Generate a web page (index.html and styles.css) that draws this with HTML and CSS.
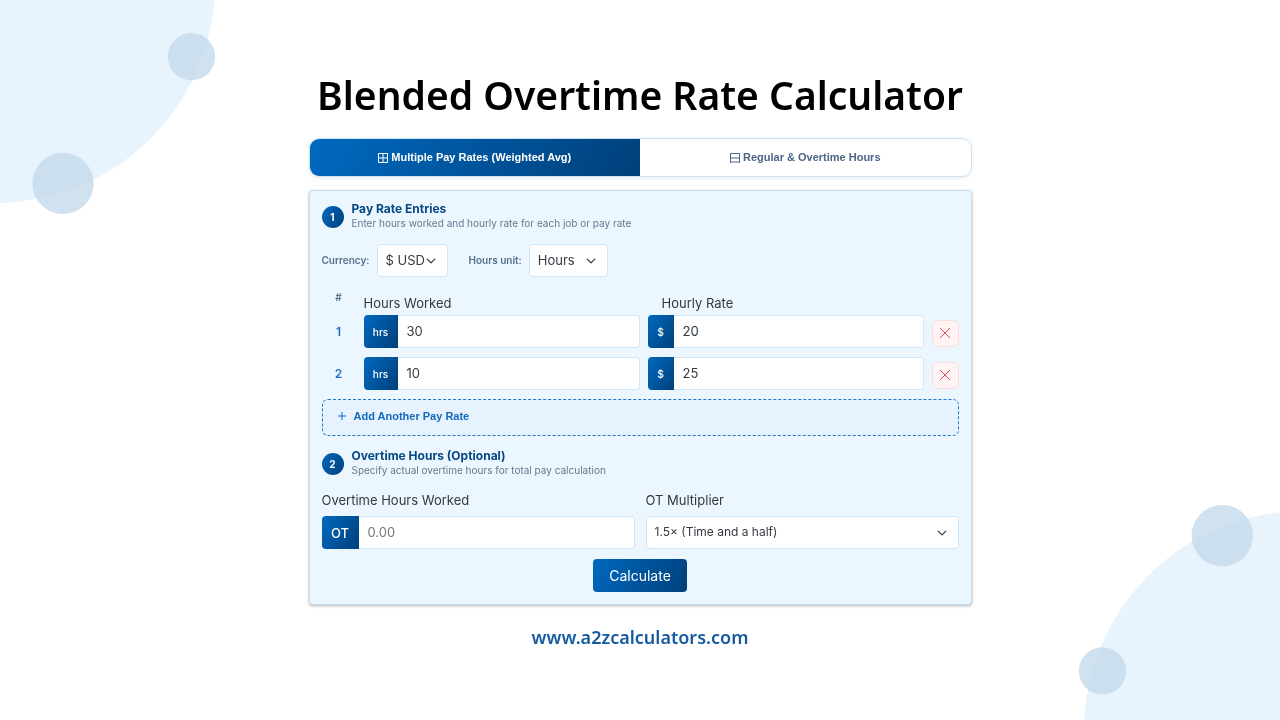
FILE: index.html
```html
<!DOCTYPE html>
<html lang="en">
<head>
<meta charset="utf-8">
<meta name="viewport" content="width=device-width, initial-scale=1">
<title>Blended Overtime Rate Calculator</title>
<link rel="stylesheet" href="styles.css">
</head>
<body>
<div class="decor" aria-hidden="true">
  <svg class="decor-art decor-top" viewBox="0 0 230 230">
    <circle class="blob" cx="-5" cy="-17" r="220"/>
    <circle class="bubble" cx="191.5" cy="56.7" r="23.7"/>
    <circle class="bubble" cx="63" cy="183.4" r="30.7"/>
  </svg>
  <svg class="decor-art decor-bottom" viewBox="0 0 230 230">
    <circle class="blob" cx="254" cy="241" r="220"/>
    <circle class="bubble" cx="172.3" cy="45.7" r="30.7"/>
    <circle class="bubble" cx="52.5" cy="180.9" r="23.7"/>
  </svg>
</div>

<main class="page">
  <h1 class="title">Blended Overtime Rate Calculator</h1>

  <div class="tabs" role="tablist">
    <button class="tab tab-active" type="button" role="tab" aria-selected="true">
      <svg class="tab-icon" viewBox="0 0 10 10"><path d="M.5.5h9v9h-9zM5 .5v9M.5 5h9"/></svg>
      Multiple Pay Rates (Weighted Avg)
    </button>
    <button class="tab" type="button" role="tab" aria-selected="false">
      <svg class="tab-icon" viewBox="0 0 10 10"><path d="M.5 10V.5h9V10M.5 5h9M.5 9h9"/></svg>
      Regular &amp; Overtime Hours
    </button>
  </div>

  <form class="panel">
    <section>
      <header class="section-head">
        <span class="step">1</span>
        <div>
          <h2 class="section-title">Pay Rate Entries</h2>
          <p class="section-note">Enter hours worked and hourly rate for each job or pay rate</p>
        </div>
      </header>

      <div class="options">
        <div class="option">
          <label class="option-label" for="currency">Currency:</label>
          <select class="control select select-currency" id="currency"><option>$ USD</option></select>
        </div>
        <div class="option">
          <label class="option-label" for="unit">Hours unit:</label>
          <select class="control select select-unit" id="unit"><option>Hours</option></select>
        </div>
      </div>

      <div class="entries-head">
        <span class="hash">#</span>
        <label class="label" for="hours1">Hours Worked</label>
        <label class="label" for="rate1">Hourly Rate</label>
      </div>
      <div class="entries">
        <div class="entry">
          <span class="index">1</span>
          <div class="group"><span class="addon addon-hrs">hrs</span><input class="control input" id="hours1" type="text" value="30"></div>
          <div class="group"><span class="addon addon-money">$</span><input class="control input" id="rate1" type="text" value="20"></div>
          <button class="remove" type="button" aria-label="Remove row 1"><svg class="remove-icon" viewBox="0 0 12 12"><path d="M1 1l10 10M11 1L1 11"/></svg></button>
        </div>
        <div class="entry">
          <span class="index">2</span>
          <div class="group"><span class="addon addon-hrs">hrs</span><input class="control input" type="text" value="10" aria-label="Hours Worked"></div>
          <div class="group"><span class="addon addon-money">$</span><input class="control input" type="text" value="25" aria-label="Hourly Rate"></div>
          <button class="remove" type="button" aria-label="Remove row 2"><svg class="remove-icon" viewBox="0 0 12 12"><path d="M1 1l10 10M11 1L1 11"/></svg></button>
        </div>
      </div>
      <button class="add" type="button">
        <svg class="add-icon" viewBox="0 0 8 8"><path d="M4 0v8M0 4h8"/></svg>
        Add Another Pay Rate
      </button>
    </section>

    <section>
      <header class="section-head">
        <span class="step">2</span>
        <div>
          <h2 class="section-title">Overtime Hours (Optional)</h2>
          <p class="section-note">Specify actual overtime hours for total pay calculation</p>
        </div>
      </header>
      <div class="overtime">
        <div class="field">
          <label class="label" for="ot">Overtime Hours Worked</label>
          <div class="group"><span class="addon addon-ot">OT</span><input class="control input" id="ot" type="text" placeholder="0.00"></div>
        </div>
        <div class="field">
          <label class="label" for="multiplier">OT Multiplier</label>
          <select class="control select select-multiplier" id="multiplier"><option>1.5× (Time and a half)</option></select>
        </div>
      </div>
    </section>
    <button class="calculate" type="button">Calculate</button>
  </form>

  <a class="site" href="#">www.a2zcalculators.com</a>
</main>
</body>
</html>
```
FILE: styles.css
```css
:root {
  --blue: #0069c0;
  --navy: #00407a;
  --slate: #55708c;
  --line: #cfe7fb;
  --fill: linear-gradient(120deg, var(--blue), var(--navy));
}

* { box-sizing: border-box; }

body {
  margin: 0;
  min-height: 100vh;
  background: #fff;
  color: #343a40;
  font: 13px/20px Inter, "Liberation Sans", sans-serif;
}

h1, h2, p { margin: 0; }
button, input, select { font: inherit; }
button { cursor: pointer; }

.decor {
  position: fixed;
  inset: 0;
  z-index: -1;
}
.decor-art { position: absolute; width: 230px; }
.decor-top { top: 0; left: 0; }
.decor-bottom { right: 0; bottom: 0; }
.blob { fill: #e8f4fd; }
.bubble { fill: #c4d9eb; fill-opacity: .8; }

.page {
  display: flex;
  flex-direction: column;
  align-items: stretch;
  width: min(100% - 32px, 663px);
  margin: 0 auto;
  padding: 71px 0 32px;
}

.title {
  align-self: center;
  margin-bottom: 19px;
  color: #000;
  font: 600 39px/48px "Noto Sans", sans-serif;
  text-align: center;
}

.tabs {
  display: grid;
  grid-template-columns: 1fr 1fr;
  margin-bottom: 13px;
  border: 1px solid #cfe3f3;
  border-radius: 10px;
  background: #fff;
  box-shadow: 0 1px 4px rgba(0, 105, 192, .12);
  overflow: hidden;
}
.tab {
  display: flex;
  align-items: center;
  justify-content: center;
  gap: 3px;
  height: 37px;
  padding: 0 0 2px;
  border: 0;
  background: none;
  color: #4c6685;
  font: bold 11px/16px "Liberation Sans", Arial, sans-serif;
}
.tab-active { background: var(--fill); color: #fff; }
.tab-icon {
  width: 10px;
  margin-top: 2px;
  fill: none;
  stroke: currentColor;
}

.panel {
  display: flex;
  flex-direction: column;
  padding: 10px 12px 12px;
  border: 1px solid #c3dff3;
  border-radius: 4px;
  background: #ebf6ff;
  box-shadow: 0 1px 3px rgba(0, 0, 0, .3);
}

.section-head {
  display: flex;
  align-items: center;
  gap: 8px;
}
.step {
  display: grid;
  place-items: center;
  width: 22px;
  height: 22px;
  margin-top: 2px;
  border-radius: 50%;
  background: var(--fill);
  color: #fff;
  font-size: 10px;
  font-weight: 700;
}
.section-title {
  color: #064683;
  font-size: 12px;
  font-weight: 700;
  line-height: 15px;
}
.section-note {
  color: #65798d;
  font-size: 10px;
  line-height: 14px;
}

.options {
  display: flex;
  gap: 21px;
  margin: 14px 0 13px;
}
.option {
  display: flex;
  align-items: center;
  gap: 7px;
}
.option-label {
  padding-bottom: 2px;
  color: var(--slate);
  font-size: 10px;
  font-weight: 600;
}

.control {
  width: 100%;
  height: 33px;
  border: 1px solid var(--line);
  border-radius: 4px;
  background-color: #fff;
  color: #343a40;
  font-size: 13px;
}
.select {
  padding: 0 8px 2px;
  appearance: none;
  background-image: url("data:image/svg+xml,%3Csvg xmlns='http://www.w3.org/2000/svg' viewBox='0 0 16 16'%3E%3Cpath fill='none' stroke='%23343a40' stroke-linecap='round' stroke-linejoin='round' stroke-width='2' d='m2 5 6 6 6-6'/%3E%3C/svg%3E");
  background-repeat: no-repeat;
  background-position: right 11px center;
  background-size: 10px 10px;
}
.select-currency { width: 71px; }
.select-unit { width: 79px; }
.select-multiplier { font-size: 12px; }
.input {
  min-width: 0;
  padding: 0 9px 2px;
  border-left: 0;
  border-radius: 0 4px 4px 0;
}
.input::placeholder { color: #757575; opacity: 1; }

.label { line-height: 20px; }

.entries-head {
  display: grid;
  grid-template-columns: 34px 1fr 1fr;
  gap: 8px;
  align-items: end;
  padding-right: 7px;
}
.hash {
  align-self: start;
  color: var(--slate);
  font-size: 10px;
  font-weight: 600;
  line-height: 14px;
  text-align: center;
}
.entries-head .label { padding-top: 3px; }
.entries {
  display: grid;
  gap: 9px;
  margin: 2px 0 9px;
}
.entry {
  display: grid;
  grid-template-columns: 34px 1fr 1fr 27px;
  gap: 8px;
  align-items: center;
}
.index {
  color: #1b6dc1;
  font-size: 12px;
  font-weight: 600;
  text-align: center;
}
.group { display: flex; }
.addon {
  display: grid;
  flex: none;
  place-items: center;
  border-radius: 4px 0 0 4px;
  background: var(--fill);
  color: #fff;
  font-size: 10px;
  font-weight: 500;
}
.addon-hrs { width: 34px; }
.addon-money { width: 26px; }
.addon-ot { width: 37px; font-size: 13px; }

.remove {
  display: grid;
  place-items: center;
  height: 27px;
  margin-top: 3px;
  padding: 0;
  border: 1px solid #fbdcdc;
  border-radius: 6px;
  background: #fff3f3;
}
.remove-icon {
  width: 12px;
  fill: none;
  stroke: #e04f5c;
}

.add {
  display: flex;
  align-items: center;
  gap: 8px;
  width: 100%;
  height: 37px;
  margin-bottom: 12px;
  padding: 0 15px 3px;
  border: 1px dashed #2177c9;
  border-radius: 6px;
  background: #e6f3ff;
  color: #1269bb;
  font: bold 11px/16px "Liberation Sans", Arial, sans-serif;
}
.add-icon {
  width: 8px;
  fill: none;
  stroke: currentColor;
}

.overtime {
  display: grid;
  grid-template-columns: 1fr 1fr;
  gap: 11px;
  margin: 13px 0 10px;
}
.field {
  display: flex;
  flex-direction: column;
  gap: 6px;
}

.calculate {
  align-self: center;
  height: 33px;
  padding: 0 16px;
  border: 0;
  border-radius: 4px;
  background: var(--fill);
  color: #fff;
  font-size: 14px;
}

.site {
  align-self: center;
  margin-top: 20px;
  color: #165a9f;
  font: 600 18px/24px "Noto Sans", sans-serif;
  text-decoration: none;
}
```
